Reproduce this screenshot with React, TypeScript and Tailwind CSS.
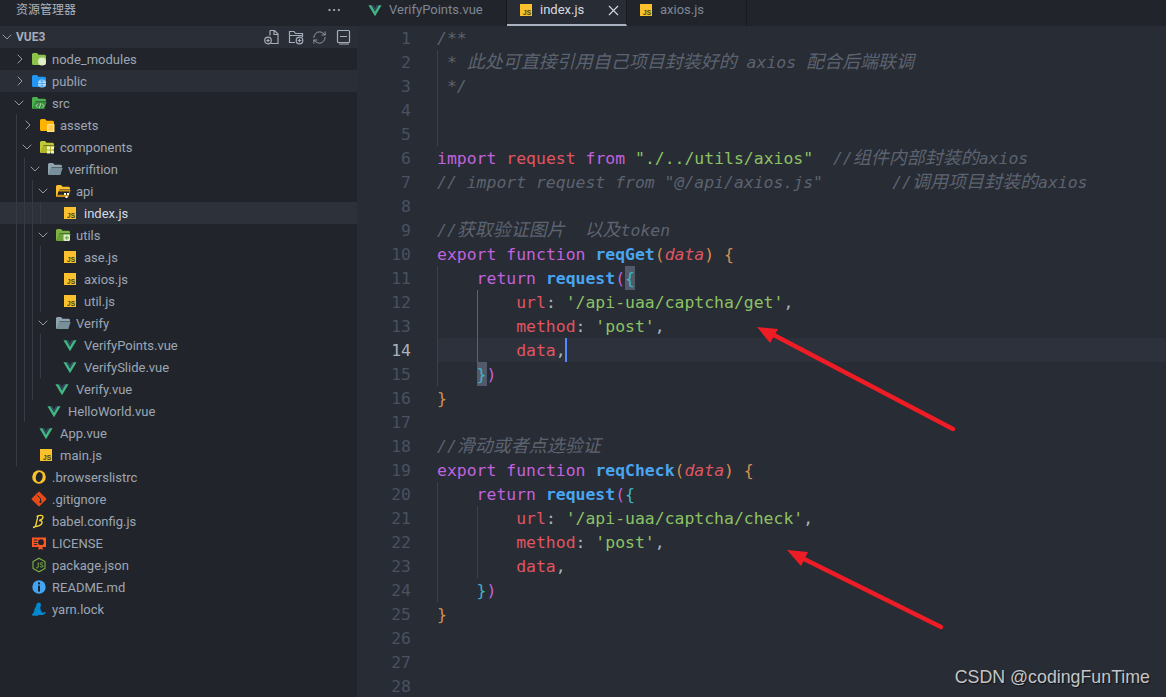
import type { ReactNode } from 'react'
import { ChevronDown, ChevronRight, Ellipsis, RefreshCw, X } from 'lucide-react'

type IconName =
	| 'node' | 'public' | 'src' | 'assets' | 'components' | 'grey' | 'api' | 'utils'
	| 'js' | 'vue' | 'browsers' | 'git' | 'babel' | 'license' | 'pkg' | 'readme' | 'yarn'

type TreeNode = {
	name: string
	icon: IconName
	open?: boolean
	closed?: boolean
	active?: boolean
	hover?: boolean
	children?: TreeNode[]
}

const tree: TreeNode[] = [
	{ name: 'node_modules', icon: 'node', closed: true },
	{ name: 'public', icon: 'public', closed: true, hover: true },
	{
		name: 'src',
		icon: 'src',
		open: true,
		children: [
			{ name: 'assets', icon: 'assets', closed: true },
			{
				name: 'components',
				icon: 'components',
				open: true,
				children: [
					{
						name: 'verifition',
						icon: 'grey',
						open: true,
						children: [
							{
								name: 'api',
								icon: 'api',
								open: true,
								children: [{ name: 'index.js', icon: 'js', active: true }],
							},
							{
								name: 'utils',
								icon: 'utils',
								open: true,
								children: [
									{ name: 'ase.js', icon: 'js' },
									{ name: 'axios.js', icon: 'js' },
									{ name: 'util.js', icon: 'js' },
								],
							},
							{
								name: 'Verify',
								icon: 'grey',
								open: true,
								children: [
									{ name: 'VerifyPoints.vue', icon: 'vue' },
									{ name: 'VerifySlide.vue', icon: 'vue' },
								],
							},
							{ name: 'Verify.vue', icon: 'vue' },
						],
					},
					{ name: 'HelloWorld.vue', icon: 'vue' },
				],
			},
			{ name: 'App.vue', icon: 'vue' },
			{ name: 'main.js', icon: 'js' },
		],
	},
	{ name: '.browserslistrc', icon: 'browsers' },
	{ name: '.gitignore', icon: 'git' },
	{ name: 'babel.config.js', icon: 'babel' },
	{ name: 'LICENSE', icon: 'license' },
	{ name: 'package.json', icon: 'pkg' },
	{ name: 'README.md', icon: 'readme' },
	{ name: 'yarn.lock', icon: 'yarn' },
]

const FOLDER = 'M1 3.5A1.5 1.5 0 0 1 2.5 2H6l1.6 1.8h5.9A1.5 1.5 0 0 1 15 5.3v7.2a1.5 1.5 0 0 1-1.5 1.5h-11A1.5 1.5 0 0 1 1 12.5z'
const FOLDER_OPEN = 'M1 3.5A1.5 1.5 0 0 1 2.5 2H6l1.6 1.8h5.9A1.5 1.5 0 0 1 15 5.3V6.5H4.5L2.4 13 1 14z'
const FOLDER_OPEN_FRONT = 'M4 7h11.6l-2.2 7H1.6z'

function JsIcon() {
	return (
		<span className="flex h-3 w-3 shrink-0 items-end justify-end bg-[#fbc02d] pr-px font-['Liberation_Sans',sans-serif] text-[6.5px] font-bold leading-none text-[#4a3b10]">
			JS
		</span>
	)
}

function VueIcon() {
	return (
		<svg viewBox="0 0 16 14" className="h-[13px] w-[14px] shrink-0">
			<path d="M0.5 1h3.4L8 8.2 12.1 1h3.4L8 13.6z" fill="#41b883" />
			<path d="M3.9 1h2.2L8 4.3 9.9 1h2.2L8 8.2z" fill="#35495e" />
		</svg>
	)
}

function FileIcon({ name }: { name: IconName }) {
	if (name === 'js') return <JsIcon />
	if (name === 'vue') return <VueIcon />
	return (
		<svg viewBox="0 0 16 16" className="h-4 w-4 shrink-0">
			{name === 'node' && (
				<>
					<path d={FOLDER} fill="#8bc34a" />
					<circle cx="11" cy="10.5" r="4" fill="#dcedc8" />
				</>
			)}
			{name === 'public' && (
				<>
					<path d={FOLDER} fill="#2196f3" />
					<circle cx="11" cy="10.5" r="4" fill="#bbdefb" />
					<path d="M7 10.5h8M11 6.5v8M8.5 8h5M8.5 13h5" stroke="#2196f3" strokeWidth="0.7" />
				</>
			)}
			{name === 'src' && (
				<>
					<path d={FOLDER_OPEN} fill="#4caf50" />
					<path d={FOLDER_OPEN_FRONT} fill="#388e3c" />
					<path d="M7 8.6 5 10.7l2 2M11 8.6l2 2.1-2 2M9.7 8.3l-1.3 4.8" fill="none" stroke="#c8e6c9" strokeWidth="0.9" />
				</>
			)}
			{name === 'assets' && (
				<>
					<path d={FOLDER} fill="#ffb300" />
					<rect x="8" y="7" width="7.5" height="8" rx="0.6" fill="#ffe082" />
					<path d="M9.5 9.2h4.5M9.5 11h4.5M9.5 12.8h4.5" stroke="#ffb300" strokeWidth="0.8" />
				</>
			)}
			{name === 'components' && (
				<>
					<path d={FOLDER_OPEN} fill="#c0ca33" />
					<path d={FOLDER_OPEN_FRONT} fill="#afb42b" />
					<path d="M8 7.5h3v3H8zM12 7.5h3v3h-3zM8 11.5h3v3H8zM12 11.5h3v3h-3z" fill="#f0f4c3" />
				</>
			)}
			{name === 'grey' && (
				<>
					<path d={FOLDER_OPEN} fill="#90a4ae" />
					<path d={FOLDER_OPEN_FRONT} fill="#78909c" />
				</>
			)}
			{name === 'api' && (
				<>
					<path d={FOLDER_OPEN} fill="#fbc02d" />
					<path d="M4 7h11.6l-2.2 7H1.6z" fill="#c98f15" />
					<path d="M3.4 8.4h11l-.8 3.4H2.6z" fill="#21252b" />
					<path d="M9 10h2v2H9zM12 10h2v2h-2zM10.5 13h2v2h-2z" fill="#fff8e1" />
				</>
			)}
			{name === 'utils' && (
				<>
					<path d={FOLDER_OPEN} fill="#7cb342" />
					<path d={FOLDER_OPEN_FRONT} fill="#689f38" />
					<rect x="8.5" y="7.5" width="6.5" height="6.5" rx="1" fill="#dcedc8" />
					<path d="M11.8 8.8v4M9.8 10.8h4" stroke="#689f38" strokeWidth="1" />
				</>
			)}
			{name === 'browsers' && (
				<>
					<circle cx="8" cy="8" r="6.8" fill="#fbc02d" />
					<ellipse cx="8.2" cy="8" rx="3.4" ry="5" fill="#21252b" transform="rotate(12 8 8)" />
				</>
			)}
			{name === 'git' && (
				<>
					<rect x="2.5" y="2.5" width="11" height="11" rx="1" transform="rotate(45 8 8)" fill="#e64a19" />
					<path d="M6.3 4.3 9.5 7.5v3.5" stroke="#21252b" strokeWidth="1" fill="none" />
					<circle cx="9.5" cy="11" r="1.1" fill="#21252b" />
				</>
			)}
			{name === 'babel' && (
				<path d="M5.5 3.5c3-1.7 7-1.7 6.5.8-.3 1.5-2 2.7-3.8 3.2 2 0 3.2.8 2.8 2.5-.5 2.2-4.4 3.6-7.5 3.6M7 2.8 4.4 14M2 14.5l2-.5" fill="none" stroke="#fdd835" strokeWidth="1.3" />
			)}
			{name === 'license' && (
				<>
					<path d="M1 2.5h14v9.5h-3.5v3l-2-1.2-2 1.2v-3H1z" fill="#ff5722" />
					<path d="M2.8 5h3.6M2.8 7.4h3.6M2.8 9.6h3.6" stroke="#21252b" strokeWidth="1" />
					<circle cx="10" cy="7.2" r="2.9" fill="#21252b" />
				</>
			)}
			{name === 'pkg' && (
				<>
					<path d="M8 1.2 14 4.6v6.8L8 14.8 2 11.4V4.6z" fill="none" stroke="#7cb342" strokeWidth="1.1" />
					<path d="M7.2 5.5v4.6c0 .9-1.2 1-2 .5M12 6.2c-.8-.8-2.8-.8-2.8.5 0 1.6 2.9.8 2.9 2.4 0 1.2-2.2 1.2-3.1.4" fill="none" stroke="#7cb342" strokeWidth="1" />
				</>
			)}
			{name === 'readme' && (
				<>
					<circle cx="8" cy="8" r="6.7" fill="#42a5f5" />
					<rect x="7" y="3.4" width="2" height="2" fill="#21252b" />
					<rect x="7" y="6.6" width="2" height="6" fill="#21252b" />
				</>
			)}
			{name === 'yarn' && (
				<path d="M5 5.5C5.2 3.5 6 2 7.5 1.5L9.5 2 10 4.5 9.2 6.5 10 10l1.5 1.8L14.5 11l.5.8-3 2.2H8l-1.5.8H1.5L1 13.5l2-2.5.6-3.2z" fill="#0288d1" />
			)}
		</svg>
	)
}

function TreeRow({ node, depth }: { node: TreeNode; depth: number }) {
	return (
		<div
			className={`relative flex h-[22px] items-center ${node.active ? 'bg-[#2c313a] text-[#d7dae0]' : node.hover ? 'bg-[#2a2e37]' : ''}`}
			style={{ paddingLeft: 11 + depth * 8 }}
		>
			<span className="flex w-5 shrink-0 items-center justify-start">
				{node.open && <ChevronDown size={16} strokeWidth={1.3} className="text-[#a6adba]" />}
				{node.closed && <ChevronRight size={16} strokeWidth={1.3} className="ml-px text-[#a6adba]" />}
			</span>
			<span className={`flex w-[21px] shrink-0 items-center ${node.icon === 'js' ? 'pl-[1px]' : ''}`}>
				<FileIcon name={node.icon} />
			</span>
			<span className="relative top-px whitespace-nowrap">{node.name}</span>
		</div>
	)
}

function TreeList({ nodes, depth }: { nodes: TreeNode[]; depth: number }) {
	return (
		<>
			{nodes.map((node) => (
				<div key={node.name}>
					<TreeRow node={node} depth={depth} />
					{node.children && (
						<div className="relative">
							<TreeList nodes={node.children} depth={depth + 1} />
							<div
								className="absolute inset-y-0 w-px bg-[#353a44]"
								style={{ left: 16 + depth * 8 }}
							/>
						</div>
					)}
				</div>
			))}
		</>
	)
}

function Sidebar() {
	return (
		<aside className="flex w-[357px] shrink-0 flex-col bg-[#21252b] font-['Roboto','Noto_Sans_CJK_SC',sans-serif] text-[13px] text-[#9da5b4]">
			<div className="flex h-[26px] shrink-0 items-center justify-between pb-[6px] pl-4 pr-[15px]">
				<span className="text-[12px] text-[#abb2bf]">资源管理器</span>
				<Ellipsis size={16} strokeWidth={1.5} className="text-[#abb2bf]" />
			</div>
			<div className="flex h-[22px] shrink-0 items-center bg-[#2a2e37]">
				<ChevronDown size={16} strokeWidth={1.3} className="ml-[-1px] text-[#a6adba]" />
				<span className="ml-px text-[12px] font-bold text-[#a6adba]">VUE3</span>
				<div className="ml-auto mr-[6px] flex items-center gap-2 text-[#a6adba]">
					<svg viewBox="0 0 16 16" className="h-4 w-4" fill="none" stroke="currentColor" strokeWidth="1.2">
						<path d="M6 1.5h4.5L14 5v9.5H7M10 1.5V5.5h4M6 1.5v5" />
						<circle cx="4" cy="11.5" r="3.3" />
						<path d="M4 9.7v3.6M2.2 11.5h3.6" />
					</svg>
					<svg viewBox="0 0 16 16" className="h-4 w-4" fill="none" stroke="currentColor" strokeWidth="1.2">
						<path d="M7 13.5H1.5v-11h4.5l1.5 2h7V8M1.5 6.5h13" />
						<circle cx="11.5" cy="11.5" r="3.3" />
						<path d="M11.5 9.7v3.6M9.7 11.5h3.6" />
					</svg>
					<RefreshCw size={15} strokeWidth={1.3} />
					<svg viewBox="0 0 16 16" className="h-4 w-4" fill="none" stroke="currentColor" strokeWidth="1.2">
						<rect x="2.5" y="1.5" width="12" height="12" rx="1" />
						<path d="M5 7.5h7M4 15h10" />
					</svg>
				</div>
			</div>
			<TreeList nodes={tree} depth={0} />
		</aside>
	)
}

type Tok = [string, string]

const kw = 'text-[#c162de]'
const red = 'text-[#e05561]'
const str = 'text-[#8cc265]'
const com = 'text-[#5c6370] italic'
const fn = 'text-[#4aa5f0] font-bold'
const pun = 'text-[#abb2bf]'
const org = 'text-[#d18f52]'
const teal = 'text-[#42b3c2]'
const match = 'text-[#42b3c2] bg-[#515a6b] inline-block h-6 align-top'
const par = 'text-[#e05561] italic'

const code: Tok[][] = [
	[['/**', com]],
	[[' * 此处可直接引用自己项目封装好的 axios 配合后端联调', com]],
	[[' */', com]],
	[],
	[],
	[['import', kw], [' ', pun], ['request', red], [' ', pun], ['from', kw], [' ', pun], ['"./../utils/axios"', str], ['  ', pun], ['//组件内部封装的axios', com]],
	[['// import request from "@/api/axios.js"       //调用项目封装的axios', com]],
	[],
	[['//获取验证图片  以及token', com]],
	[['export', kw], [' ', pun], ['function', kw], [' ', pun], ['reqGet', fn], ['(', org], ['data', par], [')', org], [' ', pun], ['{', org]],
	[['    ', pun], ['return', kw], [' ', pun], ['request', fn], ['(', kw], ['{', match]],
	[['        ', pun], ['url', red], [': ', pun], ["'/api-uaa/captcha/get'", str], [',', pun]],
	[['        ', pun], ['method', red], [': ', pun], ["'post'", str], [',', pun]],
	[['        ', pun], ['data', red], [',', pun]],
	[['    ', pun], ['}', match], [')', kw]],
	[['}', org]],
	[],
	[['//滑动或者点选验证', com]],
	[['export', kw], [' ', pun], ['function', kw], [' ', pun], ['reqCheck', fn], ['(', org], ['data', par], [')', org], [' ', pun], ['{', org]],
	[['    ', pun], ['return', kw], [' ', pun], ['request', fn], ['(', kw], ['{', teal]],
	[['        ', pun], ['url', red], [': ', pun], ["'/api-uaa/captcha/check'", str], [',', pun]],
	[['        ', pun], ['method', red], [': ', pun], ["'post'", str], [',', pun]],
	[['        ', pun], ['data', red], [',', pun]],
	[['    ', pun], ['}', teal], [')', kw]],
	[['}', org]],
	[],
	[],
	[],
]

// editor fonts: latin glyphs are 9.9px wide, CJK glyphs are a full 18px
function Segments({ text }: { text: string }) {
	const parts = text.split(/([\u4e00-\u9fff]+)/)
	return (
		<>
			{parts.map((part, i) =>
				i % 2 === 1 ? (
					<span key={i} className="font-['Noto_Sans_CJK_SC',sans-serif] text-[18px] leading-none">
						{part}
					</span>
				) : (
					part
				)
			)}
		</>
	)
}

function guidesFor(line: number): ReactNode {
	const faint = 'absolute inset-y-0 w-px bg-[#3b4048]'
	const strong = 'absolute inset-y-0 w-px bg-[#5c6370]'
	return (
		<>
			{((line >= 2 && line <= 5) || (line >= 11 && line <= 15) || (line >= 20 && line <= 24)) && (
				<span className={`${faint} left-0`} />
			)}
			{line >= 12 && line <= 14 && <span className={`${strong} left-[40px]`} />}
			{line >= 21 && line <= 23 && <span className={`${faint} left-[40px]`} />}
		</>
	)
}

function Editor() {
	return (
		<div className="min-h-0 flex-1 overflow-hidden font-['DejaVu_Sans_Mono',monospace] text-[16.45px]">
			{code.map((toks, i) => {
				const line = i + 1
				const current = line === 14
				return (
					<div key={line} className="flex h-6 leading-[26px]">
						<span className={`w-[54px] shrink-0 text-right ${current ? 'text-[#abb2bf]' : 'text-[#495162]'}`}>
							{line}
						</span>
						<div className={`relative ml-[26px] h-6 flex-1 whitespace-pre ${current ? 'bg-[#2c313c]' : ''}`}>
							{guidesFor(line)}
							{toks.map(([t, c], j) => (
								<span key={j} className={c}>
									<Segments text={t} />
								</span>
							))}
							{current && <span className="absolute inset-y-0 left-[128px] w-0.5 bg-[#528bff]" />}
						</div>
					</div>
				)
			})}
		</div>
	)
}

function Tab({ label, icon, active }: { label: string; icon: ReactNode; active?: boolean }) {
	return (
		<div
			className={`flex h-[26px] items-center border-r border-[#181a1f] ${
				active ? 'w-[120px] border-b-2 border-b-[#abb2bf] bg-[#282c34] pb-[4px] text-[#d7dae0]' : 'pb-[6px] text-[#7f8694]'
			} ${label === 'VerifyPoints.vue' ? 'w-[150px] pl-[11px]' : 'w-[120px] pl-3'}`}
		>
			<span className="mr-[7px] flex w-[14px] justify-center">{icon}</span>
			<span>{label}</span>
			{active && <X size={17} strokeWidth={1.5} className="ml-auto mr-[4px] text-[#d7dae0]" />}
		</div>
	)
}

export default function App() {
	return (
		<div className="relative flex h-[697px] w-[1166px] overflow-hidden bg-[#282c34]">
			<Sidebar />
			<main className="flex min-w-0 flex-1 flex-col">
				<div className="flex h-[26px] shrink-0 bg-[#21252b] font-['Roboto',sans-serif] text-[13px]">
					<Tab label="VerifyPoints.vue" icon={<VueIcon />} />
					<Tab label="index.js" icon={<JsIcon />} active />
					<Tab label="axios.js" icon={<JsIcon />} />
				</div>
				<Editor />
			</main>
			{/* annotation arrows drawn on top of the screenshot */}
			<svg viewBox="0 0 1166 697" className="pointer-events-none absolute inset-0 h-[697px] w-[1166px]">
				<path d="M953 429 770 333" stroke="#ee1c25" strokeWidth="4.5" strokeLinecap="round" />
				<path d="M757 327 778 329 770 343z" fill="#ee1c25" />
				<path d="M941 627 798 556" stroke="#ee1c25" strokeWidth="4.5" strokeLinecap="round" />
				<path d="M787 550 808 552 801 566z" fill="#ee1c25" />
			</svg>
			<span className="absolute bottom-[10px] right-[16px] font-['Liberation_Sans',sans-serif] text-[17.8px] leading-5 text-[#c4c5c7] [text-shadow:1px_1px_1px_rgba(0,0,0,0.6)]">
				CSDN @codingFunTime
			</span>
		</div>
	)
}
